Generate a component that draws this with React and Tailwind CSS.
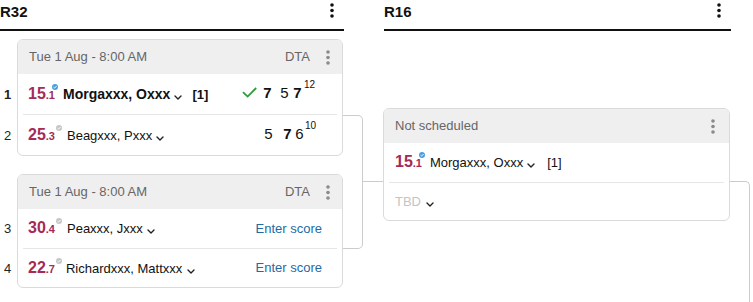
import React from "react";

function Dots({ color = "#8a8a8a", className = "" }) {
  return (
    <svg width="4" height="15" viewBox="0 0 4 15" className={className} fill={color}>
      <circle cx="2" cy="2" r="1.8" />
      <circle cx="2" cy="7.5" r="1.8" />
      <circle cx="2" cy="13" r="1.8" />
    </svg>
  );
}

function Badge({ verified, className = "" }) {
  return (
    <svg
      width="6"
      height="6"
      viewBox="0 0 6 6"
      className={`relative -top-[9px] ${className}`}
    >
      <circle cx="3" cy="3" r="3" fill={verified ? "#4a9fdc" : "#c6c6c6"} />
      <path d="M1.5 3.1 L2.6 4.1 L4.6 2" stroke="#fff" strokeWidth="0.9" fill="none" />
    </svg>
  );
}

function Chevron({ className = "" }) {
  return (
    <svg width="8" height="5" viewBox="0 0 8 5" className={`relative top-[1px] ${className}`}>
      <path d="M1 1 L4 4 L7 1" stroke="#222" strokeWidth="1.4" fill="none" strokeLinecap="round" strokeLinejoin="round" />
    </svg>
  );
}

function Check() {
  return (
    <svg width="15" height="11" viewBox="0 0 15 11">
      <path d="M1 5.2 L5.6 9.6 L14.2 1" stroke="#2e9b3c" strokeWidth="1.8" fill="none" />
    </svg>
  );
}

function Rating({ main, dec, verified, badgeClass = "ml-[1px]" }) {
  return (
    <>
      <span className="text-[16px] font-bold leading-[18px] text-[#a52a56]">
        {main}
        <span className="text-[11px]">{dec}</span>
      </span>
      <Badge verified={verified} className={badgeClass} />
    </>
  );
}

function Seed({ n, bold }) {
  return (
    <span
      className={`-ml-[28px] w-[28px] pl-[4px] text-[13px] leading-[18px] text-[#222] ${bold ? "font-bold" : ""}`}
    >
      {n}
    </span>
  );
}

function CardHeader({ left, right, dotsClass }) {
  return (
    <div className="flex h-[34px] items-center rounded-t-[5px] bg-[#efefef] pl-[11px] text-[13px] text-[#666]">
      <span>{left}</span>
      <span className="ml-auto">{right}</span>
      <Dots className={dotsClass} />
    </div>
  );
}

function Divider() {
  return <div className="mx-[5px] h-px bg-[#e6e6e6]" />;
}

function ColumnHeader({ title, className = "" }) {
  return (
    <div className={`flex h-[31px] items-start border-b-2 border-[#111] ${className}`}>
      <span className="pt-[2px] text-[15px] font-bold leading-[20px] text-[#111]">{title}</span>
      <Dots color="#111" className="ml-auto mr-[10px] mt-[3px]" />
    </div>
  );
}

export default function App() {
  return (
    <div className="flex h-[302px] w-[753px] overflow-hidden bg-white font-['Liberation_Sans',Arial,sans-serif] text-[#111]">
      {/* R32 column */}
      <div className="flex w-[343px] shrink-0 flex-col">
        <ColumnHeader title="R32" className="-mr-[1px]" />

        {/* Match 1 */}
        <div className="ml-[17px] mt-[8px] w-[326px] rounded-[6px] border border-[#dadada] bg-white">
          <CardHeader left="Tue 1 Aug - 8:00 AM" right="DTA" dotsClass="ml-[16px] mr-[12px]" />
          <div className="flex h-[40px] items-center pl-[10px]">
            <div className="flex items-baseline">
              <Seed n="1" bold />
              <Rating main="15" dec=".1" verified badgeClass="-ml-[3px]" />
              <span className="ml-[5px] text-[14px] font-bold leading-[18px]">Morgaxxx, Oxxx</span>
              <Chevron className="ml-[4px]" />
              <span className="ml-[10px] text-[13px] font-bold leading-[18px]">[1]</span>
            </div>
            <div className="ml-auto mr-[27px] flex items-baseline text-[15px] leading-[18px] text-[#111]">
              <Check />
              <span className="ml-[6.4px] font-bold">7</span>
              <span className="ml-[8.7px]">5</span>
              <span className="ml-[4.7px] font-bold">7</span>
              <span className="relative -top-[10px] ml-[2.3px] text-[10px]">12</span>
            </div>
          </div>
          <Divider />
          <div className="flex h-[40px] items-center pl-[10px]">
            <div className="flex items-baseline">
              <Seed n="2" />
              <Rating main="25" dec=".3" />
              <span className="ml-[5px] text-[13px] leading-[18px]">Beagxxx, Pxxx</span>
              <Chevron className="ml-[4px]" />
            </div>
            <div className="ml-auto mr-[26px] flex items-baseline text-[15px] leading-[18px] text-[#111]">
              <span>5</span>
              <span className="ml-[10.7px] font-bold">7</span>
              <span className="ml-[3.7px]">6</span>
              <span className="relative -top-[10px] ml-[1.3px] text-[10px]">10</span>
            </div>
          </div>
        </div>

        {/* Match 2 */}
        <div className="ml-[17px] mt-[18px] w-[326px] rounded-[6px] border border-[#dadada] bg-white">
          <CardHeader left="Tue 1 Aug - 8:00 AM" right="DTA" dotsClass="ml-[16px] mr-[12px]" />
          <div className="flex h-[39px] items-center pl-[10px]">
            <div className="flex items-baseline">
              <Seed n="3" />
              <Rating main="30" dec=".4" />
              <span className="ml-[5px] text-[13px] leading-[18px]">Peaxxx, Jxxx</span>
              <Chevron className="ml-[4px]" />
            </div>
            <span className="ml-auto mr-[20px] text-[13px] text-[#1f6aa5]">Enter score</span>
          </div>
          <Divider />
          <div className="flex h-[38px] items-center pl-[10px]">
            <div className="flex items-baseline">
              <Seed n="4" />
              <Rating main="22" dec=".7" />
              <span className="ml-[4px] text-[13px] leading-[18px]">Richardxxx, Mattxxx</span>
              <Chevron className="ml-[5px]" />
            </div>
            <span className="ml-auto mr-[20px] text-[13px] text-[#1f6aa5]">Enter score</span>
          </div>
        </div>
      </div>

      {/* Connector R32 -> R16 */}
      <div className="flex w-[40px] shrink-0">
        <div className="mt-[115px] h-[134px] w-[20px] rounded-r-[5px] border-y border-r border-[#cccccc]" />
        <div className="mt-[181px] h-px w-[20px] bg-[#cccccc]" />
      </div>

      {/* R16 column */}
      <div className="flex w-[347px] shrink-0 flex-col">
        <ColumnHeader title="R16" className="-mr-[1px] ml-[1px]" />
        <div className="mt-[77px] w-full rounded-[6px] border border-[#dadada] bg-white">
          <CardHeader left="Not scheduled" right="" dotsClass="mr-[14px]" />
          <div className="flex h-[39px] items-center pl-[11px]">
            <div className="flex items-baseline">
              <Rating main="15" dec=".1" verified badgeClass="-ml-[3px]" />
              <span className="ml-[5px] text-[13px] leading-[18px]">Morgaxxx, Oxxx</span>
              <Chevron className="ml-[4px]" />
              <span className="ml-[12px] text-[13px] leading-[18px]">[1]</span>
            </div>
          </div>
          <Divider />
          <div className="flex h-[37px] items-center pl-[11px]">
            <div className="flex items-baseline">
              <span className="text-[13px] leading-[18px] text-[#c4c4c4]">TBD</span>
              <Chevron className="ml-[5px]" />
            </div>
          </div>
        </div>
      </div>

      {/* Connector R16 -> next */}
      <div className="flex w-[23px] shrink-0">
        <div className="mt-[181px] h-[200px] w-[20px] rounded-tr-[5px] border-r border-t border-[#cccccc]" />
      </div>
    </div>
  );
}
